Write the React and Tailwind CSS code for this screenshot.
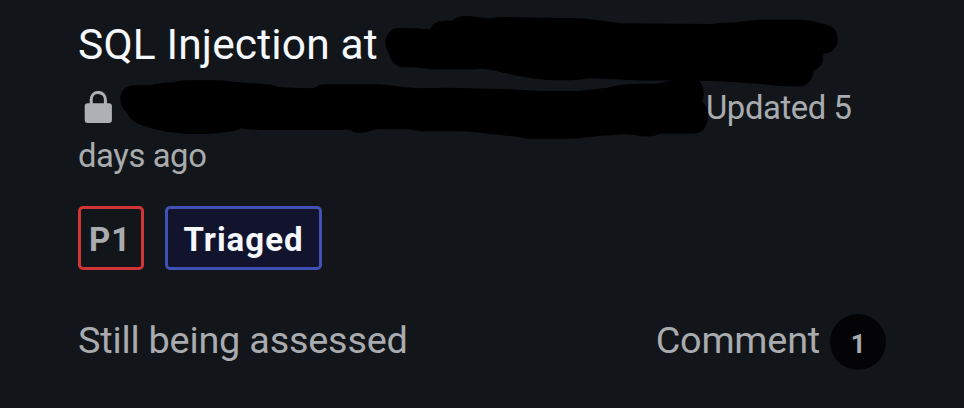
const LockIcon = () => {
  return (
    <svg className="w-7 h-8 shrink-0" viewBox="0 0 28 32" fill="none">
      <path
        d="M7.2 14V8.6C7.2 4.5 10 1.4 14.2 1.4S21.4 4.5 21.4 8.6V14"
        stroke="#adb1b6"
        strokeWidth="3"
      />
      <rect x="0.7" y="12.3" width="27.2" height="19.7" rx="3" fill="#adb1b6" />
    </svg>
  )
}

const Redaction = () => {
  return (
    <svg
      className="absolute left-0 top-0 w-[964px] h-[408px] pointer-events-none"
      viewBox="0 0 964 408"
      fill="#000"
    >
      <path d="M385.3 42C386 34 391 28.5 398 28L417 28.2Q424 29.3 430 29Q434 21.5 442 21L453 20.5Q457 16 464 16Q477 16 484 18L492 18.2Q496 17 505 17L530 17.5L580 18.3Q592 19 602 20.8L622 23.3L712 24Q720 22.5 735 22.5Q755 19.5 768 19.5L798 19.5Q812 20.3 824 24C833 25 838 32 838 39.5C838 47 832 53.5 823 54V60Q822 67 813.5 71C813 79 808 86.5 799 86.5Q780 86.5 760 84L735 82.3L712 81L640 80.5L615 79.3L589 78.3Q580 80.3 570 80.3H552Q535 79.5 516 75.5L496 71Q487 68.7 479 68.7L472 69.5H432L415 67.3H402C394 66 389 59 389 53Q385.3 49 385.3 42Z" />
      <path d="M120.3 99C120.3 91 126 85.5 133 85.3H152Q158 82.7 174 82.3Q179 80.3 186 80.3H221L232 81.7L250 83Q262 84 270 84.5L279 87L299 88L314 88.3Q319 84.3 325 84.3H380L404 87L420 88.3L448 87.7L510 89.3L540 91H578L606 88Q622 84.3 630 84L657 83.5L674 80.3L697 79.5C703 83 706 93 702 101C707 106 709 112 708 118C707 127 702 133.5 694 133.8H660Q655 136.5 647 136.5Q640 136.5 635 135L625 134.3L599 136L574 138.7H527L515 136.5L490 134L475 132L460 131.3H422L408 129.3H376Q366 133 359 133Q353 132.5 350 129.5L340 130H261L241 128.5Q235 131.5 227 132L213 133.5L204 134H188L167 132L150 128L138 124Q129 119 127 112.5Q120.3 107 120.3 99Z" />
    </svg>
  )
}

export default function App() {
  return (
    <div className="relative w-[964px] h-[408px] overflow-hidden bg-[#12161a] px-[78px] pt-5 font-['Roboto',sans-serif] text-[#a9abaf]">
      <h1 className="text-[42.5px] leading-[50px] tracking-[0.15px] text-[#f5f8fc] whitespace-nowrap">
        SQL Injection at
      </h1>
      <div className="mt-3 flex items-center h-[49px] pl-[6px]">
        <LockIcon />
        <span className="ml-[594px] mt-1 text-[32.8px] leading-[49px] tracking-[-0.4px] whitespace-nowrap">
          Updated 5
        </span>
      </div>
      <p className="pt-px text-[32.8px] leading-[49px] tracking-[-0.4px]">days ago</p>
      <div className="mt-[25px] flex gap-[21px] text-[33px] font-bold">
        <span className="flex items-center justify-center w-[66px] h-16 pt-[3px] pr-0.5 rounded-[5px] border-3 border-[#d13536] tracking-[1px]">
          P1
        </span>
        <span className="flex items-center justify-center w-[157px] h-16 pt-[3px] rounded-[5px] border-3 border-[#3f51b5] bg-[#11142c] text-[#f5f8fc] tracking-[1px]">
          Triaged
        </span>
      </div>
      <div className="mt-[43px] flex items-center justify-between h-14 text-[37.8px] leading-[56px] tracking-[-0.2px]">
        <p className="pb-0.5">Still being assessed</p>
        <div className="flex items-center">
          <span className="pb-0.5">Comment</span>
          <span className="mt-0.5 ml-2.5 flex items-center justify-center w-14 h-14 pt-[3px] rounded-full bg-[#040406] text-[26px] font-bold">
            1
          </span>
        </div>
      </div>
      <Redaction />
    </div>
  )
}
